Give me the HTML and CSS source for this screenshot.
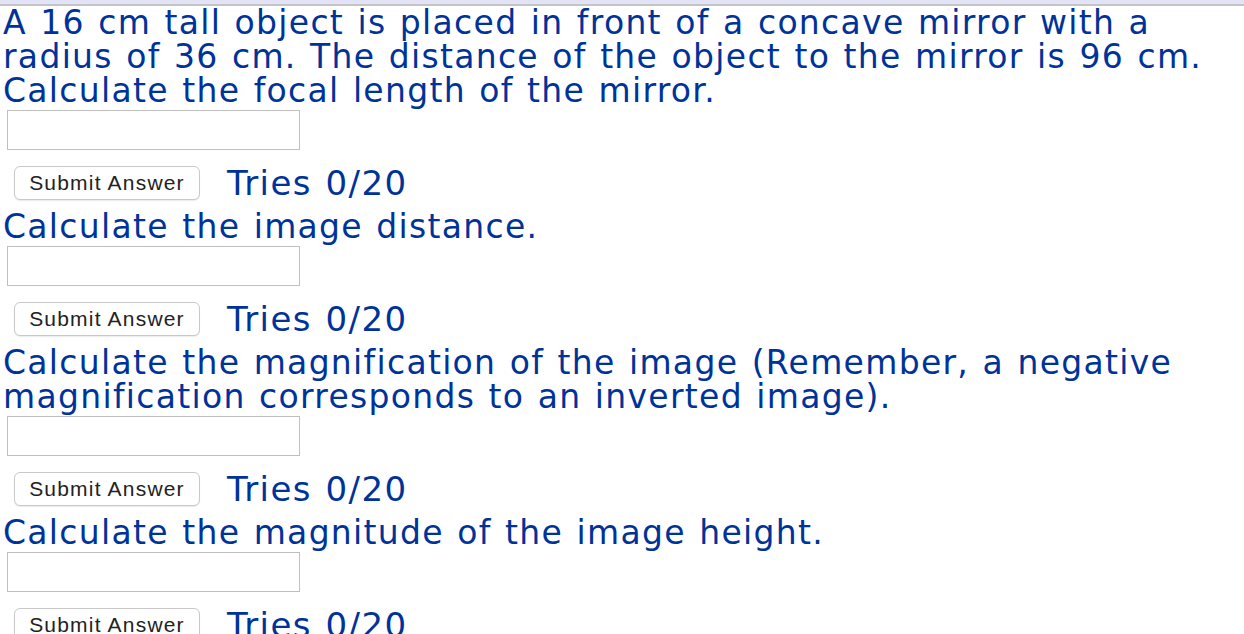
FILE: index.html
```html
<!DOCTYPE html>
<html>
<head>
<meta charset="utf-8">
<link rel="stylesheet" href="styles.css">
</head>
<body>
<div class="topbar"></div>
<div class="page">
  <div class="q">
    <p class="text">A 16 cm tall object is placed in front of a concave mirror with a radius of 36 cm. The distance of the object to the mirror is 96 cm. Calculate the focal length of the mirror.</p>
    <input class="answer" type="text">
    <div class="row"><button class="submit">Submit Answer</button><span class="tries">Tries 0/20</span></div>
  </div>
  <div class="q">
    <p class="text">Calculate the image distance.</p>
    <input class="answer" type="text">
    <div class="row"><button class="submit">Submit Answer</button><span class="tries">Tries 0/20</span></div>
  </div>
  <div class="q">
    <p class="text">Calculate the magnification of the image (Remember, a negative magnification corresponds to an inverted image).</p>
    <input class="answer" type="text">
    <div class="row"><button class="submit">Submit Answer</button><span class="tries">Tries 0/20</span></div>
  </div>
  <div class="q">
    <p class="text">Calculate the magnitude of the image height.</p>
    <input class="answer" type="text">
    <div class="row"><button class="submit">Submit Answer</button><span class="tries">Tries 0/20</span></div>
  </div>
</div>
</body>
</html>
```
FILE: styles.css
```css
html, body {
  margin: 0;
  padding: 0;
  background: #ffffff;
  overflow: hidden;
}
.topbar {
  height: 4px;
  background: #e3e3f7;
  border-bottom: 2px solid #c4c4c4;
}
.page {
  padding: 0 0 0 3px;
  font-family: "DejaVu Sans", Verdana, sans-serif;
  color: #003399;
}
.q {
  display: flex;
  flex-direction: column;
  align-items: flex-start;
}
.text {
  margin: 0;
  font-size: 33px;
  line-height: 34px;
  letter-spacing: 1.3px;
  word-spacing: 1.6px;
}
.answer {
  box-sizing: border-box;
  width: 293px;
  height: 40px;
  margin: 2px 0 0 4px;
  border: 1px solid #c0c0c0;
  padding: 0;
  background: #fff;
}
.row {
  display: flex;
  align-items: center;
  margin: 15px 0 9px;
  height: 36px;
}
.submit {
  box-sizing: border-box;
  height: 34px;
  width: 186px;
  margin-left: 11px;
  border: 1px solid #c9c9c9;
  border-radius: 6px;
  background: #fff;
  font-family: "Liberation Sans", Arial, sans-serif;
  font-size: 21px;
  letter-spacing: 1.2px;
  color: #222;
  padding: 0;
  box-shadow: 0 1px 1px rgba(0,0,0,0.08);
}
.tries {
  margin-left: 27px;
  font-size: 34px;
  line-height: 36px;
  letter-spacing: 1.4px;
  word-spacing: 1.5px;
}
```
